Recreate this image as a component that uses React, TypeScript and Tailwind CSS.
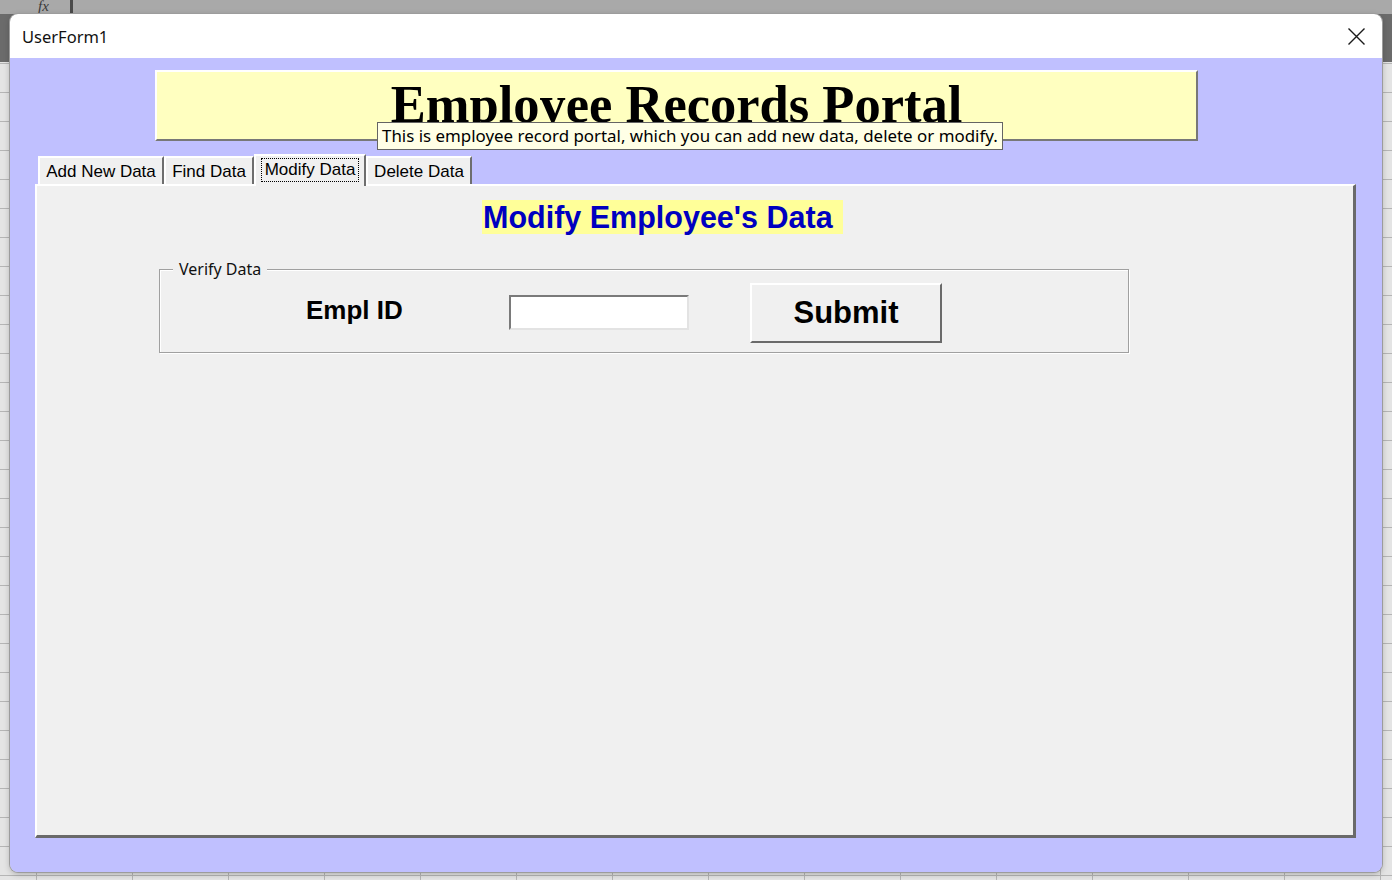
import React from "react";

const tahoma = { fontFamily: '"Liberation Sans", Arial, sans-serif' };

function Tab({ label, w, selected }: { label: string; w: number; selected?: boolean }) {
  if (selected) {
    return (
      <div
        className="relative z-10 -mb-[2px] flex h-[32px] items-start justify-center border-l-2 border-t-2 border-r-2 border-l-white border-t-white border-r-[#6e6e6e] bg-[#f0f0f0] pt-[2px] text-[17px] text-black"
        style={{ width: w }}
      >
        <span className="border border-dotted border-black px-[3px] leading-[22px]">{label}</span>
      </div>
    );
  }
  return (
    <div
      className="flex h-[28px] items-center justify-center border-l-2 border-t-2 border-r-2 border-l-white border-t-white border-r-[#6e6e6e] bg-[#f0f0f0] pt-[2px] text-[17px] text-black"
      style={{ width: w }}
    >
      {label}
    </div>
  );
}

export default function App() {
  return (
    <div className="relative h-[880px] w-[1392px] overflow-hidden bg-[#e2e2e2]" style={tahoma}>
      {/* Excel background */}
      <div className="flex h-[14px] items-start bg-[#a9a9a9]">
        <span className="ml-[38px] text-[15px] italic leading-[12px] text-[#3a3a3a]" style={{ fontFamily: '"Liberation Serif", serif' }}>
          fx
        </span>
        <div className="ml-[21px] h-[14px] w-[3px] bg-[#4a4a4a]" />
      </div>
      <div className="h-[48px] bg-[#6b6b6b]" />
      <div className="h-[818px] bg-[#e4e4e4] bg-[linear-gradient(#b5b5b5_1px,transparent_1px),linear-gradient(90deg,#b5b5b5_1px,transparent_1px)] bg-[size:96px_29px] bg-[position:36px_1px]" />

      {/* Window */}
      <div className="absolute left-[10px] top-[14px] flex h-[858px] w-[1372px] flex-col overflow-hidden rounded-[8px] shadow-[0_0_0_1px_#9c9c9c,0_2px_6px_rgba(0,0,0,0.25)]">
        <div className="relative flex h-[44px] shrink-0 items-center bg-white">
          <span className="ml-[12px] mt-[2px] text-[16.5px] text-[#111]" style={{ fontFamily: '"Noto Sans", "Open Sans", sans-serif' }}>
            UserForm1
          </span>
          <svg className="absolute left-[1338px] top-[14px]" width="17" height="17" viewBox="0 0 17 17">
            <path d="M0.5 0.5 L16.5 16.5 M16.5 0.5 L0.5 16.5" stroke="#1a1a1a" strokeWidth="1.4" />
          </svg>
        </div>

        <div className="flex flex-1 flex-col bg-[#c0c0ff] pt-[12px]">
          {/* Header */}
          <div className="relative ml-[145px] h-[71px] w-[1043px] border-b-2 border-l-2 border-r-2 border-t-2 border-b-[#787878] border-l-white border-r-[#787878] border-t-white bg-[#ffffc0]">
            <div className="h-[50px] overflow-hidden text-center">
              <div
                className="pt-[2px] text-[52.5px] font-bold leading-[60px] text-black"
                style={{ fontFamily: '"Liberation Serif", "Times New Roman", serif' }}
              >
                Employee Records Portal
              </div>
            </div>
            <div
              className="absolute left-[220px] top-[50px] flex h-[28px] w-[626px] items-center border border-[#646464] bg-[#ffffe6] pl-[4px] text-[16.9px] text-black"
              style={{ fontFamily: '"Noto Sans", "Open Sans", sans-serif' }}
            >
              This is employee record portal, which you can add new data, delete or modify.
            </div>
          </div>

          {/* Tabs */}
          <div className="ml-[28px] mt-[13px] flex h-[30px] items-end">
            <Tab label="Add New Data" w={126} />
            <Tab label="Find Data" w={90} />
            <Tab label="Modify Data" w={112} selected />
            <Tab label="Delete Data" w={106} />
          </div>

          {/* Panel */}
          <div className="ml-[25px] h-[654px] w-[1321px] border-b-[3px] border-l-2 border-r-[3px] border-t-2 border-b-[#6a6a6a] border-l-white border-r-[#6a6a6a] border-t-white bg-[#f0f0f0]">
            <div className="ml-[445px] mt-[14px] flex h-[34px] w-[361px] items-center bg-[#ffff99] pl-[1px]">
              <span className="text-[30.5px] font-bold leading-[34px] text-[#0000c0]">Modify Employee's Data</span>
            </div>

            <div className="relative ml-[122px] mt-[35px] flex h-[84px] w-[970px] items-center border border-[#a0a0a0] pl-[146px] shadow-[inset_1px_1px_0_#ffffff,1px_1px_0_#ffffff]">
              <span className="absolute left-[13px] top-[-11px] bg-[#f0f0f0] px-[6px] text-[16px] leading-[20px] text-[#111]" style={{ fontFamily: '"Noto Sans", "Open Sans", sans-serif' }}>
                Verify Data
              </span>
              <span className="mb-[2px] w-[97px] text-[26px] font-bold text-black">Empl ID</span>
              <div className="ml-[106px] mt-[3px] h-[35px] w-[180px] border-b-2 border-l-2 border-r-2 border-t-2 border-b-[#e3e3e3] border-l-[#7a7a7a] border-r-[#e3e3e3] border-t-[#7a7a7a] bg-white" />
              <div className="ml-[61px] mt-[4px] flex h-[60px] w-[192px] items-center justify-center border-b-2 border-l-2 border-r-2 border-t-2 border-b-[#6a6a6a] border-l-white border-r-[#6a6a6a] border-t-white bg-[#f0f0f0] text-[31px] font-bold text-black">
                Submit
              </div>
            </div>
          </div>
        </div>
      </div>
    </div>
  );
}
